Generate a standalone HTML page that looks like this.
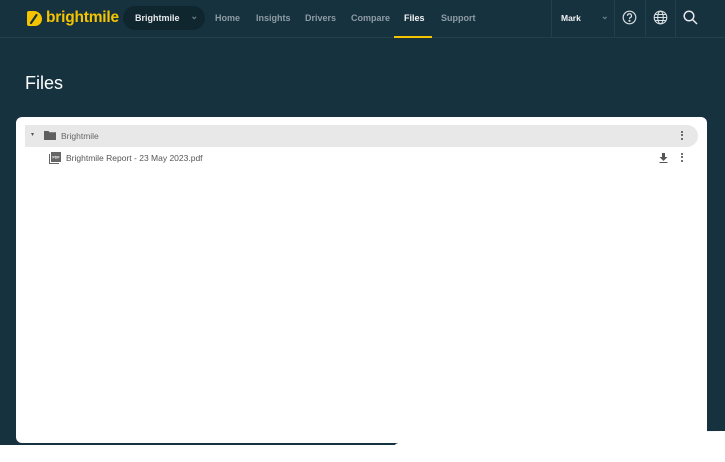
<!DOCTYPE html>
<html><head><meta charset="utf-8"><style>
*{margin:0;padding:0;box-sizing:border-box}
body{width:725px;height:462px;overflow:hidden;background:#fff;font-family:"Liberation Sans",sans-serif;position:relative}
.bg{position:absolute;left:0;top:0;width:725px;height:445px;background:#17323f}
.wedge{position:absolute;right:0;top:431px;width:330px;height:14px;background:#fff;border-top-left-radius:330px 14px}
.hdr{position:absolute;left:0;top:0;width:725px;height:38px;border-bottom:1px solid #223f4c}
.logo{position:absolute;left:26px;top:9px;display:flex;align-items:center}
.logo span{color:#f5c400;font-weight:bold;font-size:15.5px;margin-left:3px;letter-spacing:-.2px}
.sel{position:absolute;left:123px;top:6px;width:82px;height:24px;background:#10262f;border-radius:12px;color:#e6e9eb;font-size:9px;font-weight:bold;padding:7px 0 0 12px}
.sel i{position:absolute;right:7px;top:5px;color:#6b8190;font-style:normal;font-size:9px}
.nav{position:absolute;top:13px;font-size:9px;color:#8e9ca4;font-weight:bold}
.act{color:#f2f4f5}
.ul{position:absolute;left:394px;top:36px;width:38px;height:2px;background:#f5c400}
.div{position:absolute;top:0;width:1px;height:38px;background:#223f4c}
h1{position:absolute;left:25px;top:73px;color:#fff;font-size:18px;font-weight:normal}
.card{position:absolute;left:16px;top:117px;width:691px;height:326px;background:#fff;border-radius:6px}
.row1{position:absolute;left:9px;top:8px;width:673px;height:22px;background:#e8e8e8;border-radius:0 11px 11px 0}
.t{position:absolute;font-size:8.5px;color:#666}
.dots{position:absolute;width:2px}
.dots b{display:block;width:2px;height:2px;background:#444;margin-bottom:1.3px;border-radius:1px}
</style></head><body>
<div class="bg"></div><div class="wedge"></div>
<div class="hdr">
<div class="logo"><svg width="17" height="17" viewBox="0 0 17 17"><path d="M1 3a2 2 0 0 1 2-2h5a8 8 0 0 1 8 8a7 7 0 0 1-7 7H3a2 2 0 0 1-2-2z" fill="#f5c400"/><path d="M5 13L10.5 5" stroke="#17323f" stroke-width="2.2" stroke-linecap="round"/></svg><span>brightmile</span></div>
<div class="sel">Brightmile<i>⌄</i></div>
<div class="nav" style="left:215px">Home</div>
<div class="nav" style="left:256px">Insights</div>
<div class="nav" style="left:305px">Drivers</div>
<div class="nav" style="left:351px">Compare</div>
<div class="nav act" style="left:404px">Files</div>
<div class="nav" style="left:441px">Support</div>
<div class="ul"></div>
<div class="div" style="left:551px"></div><div class="div" style="left:614px"></div><div class="div" style="left:645px"></div><div class="div" style="left:675px"></div>
<div class="nav act" style="left:561px;font-size:8.5px">Mark</div>
<div class="nav" style="left:601px;font-size:9px;top:11px;color:#6b8190">⌄</div>
<svg style="position:absolute;left:622px;top:10px" width="15" height="15" viewBox="0 0 15 15" fill="none" stroke="#d8dee1" stroke-width="1.2"><circle cx="7.5" cy="7.5" r="6.3"/><path d="M5.5 5.8a2 2 0 1 1 2.7 1.8c-.6.3-.7.7-.7 1.4"/><circle cx="7.5" cy="10.8" r=".5" fill="#d8dee1"/></svg>
<svg style="position:absolute;left:653px;top:10px" width="15" height="15" viewBox="0 0 15 15" fill="none" stroke="#d8dee1" stroke-width="1.1"><circle cx="7.5" cy="7.5" r="6.3"/><ellipse cx="7.5" cy="7.5" rx="2.8" ry="6.3"/><path d="M1.2 7.5h12.6M2 4.5h11M2 10.5h11"/></svg>
<svg style="position:absolute;left:683px;top:10px" width="15" height="15" viewBox="0 0 15 15" fill="none" stroke="#e6eaec" stroke-width="1.5"><circle cx="6" cy="6" r="4.8"/><path d="M9.5 9.5l4.5 4.5"/></svg>
</div>
<h1>Files</h1>
<div class="card">
<div class="row1"></div>
<div class="t" style="left:15px;top:14px;font-size:6px;color:#555">▾</div>
<svg style="position:absolute;left:28px;top:13px" width="12" height="10" viewBox="0 0 12 10"><path d="M0 1h4.5l1 1.2H12V10H0z" fill="#5f5f5f"/></svg>
<div class="t" style="left:45px;top:14px">Brightmile</div>
<div class="dots" style="left:665px;top:14px"><b></b><b></b><b></b></div>
<svg style="position:absolute;left:33px;top:35px" width="12" height="12" viewBox="0 0 12 12"><path d="M0 2v10h10v-1H1V2z" fill="#666"/><rect x="2" y="0" width="10" height="10" fill="#666"/><text x="7" y="6.5" font-size="3.6" fill="#fff" text-anchor="middle" font-family="Liberation Sans" font-weight="bold">PDF</text></svg>
<div class="t" style="left:50px;top:36px;color:#555">Brightmile Report - 23 May 2023.pdf</div>
<svg style="position:absolute;left:643px;top:36px" width="9" height="10" viewBox="0 0 9 10"><path d="M3 0h3v4h2.5L4.5 8 .5 4H3z" fill="#555"/><rect x="0.5" y="9" width="8" height="1" fill="#555"/></svg>
<div class="dots" style="left:665px;top:36px"><b></b><b></b><b></b></div>
</div>
</body></html>
